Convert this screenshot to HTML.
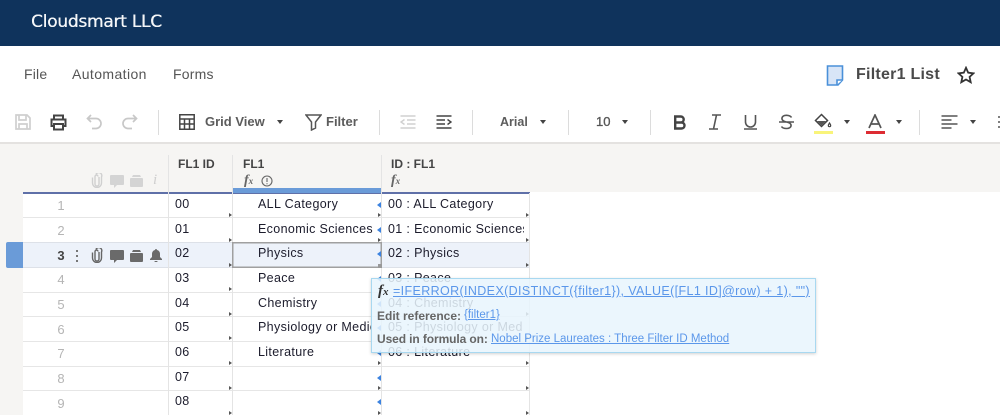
<!DOCTYPE html>
<html><head><meta charset="utf-8"><style>
html,body{margin:0;padding:0;background:#fff}
#p{position:relative;width:1000px;height:415px;overflow:hidden;background:#fff;font-family:"Liberation Sans",sans-serif;color:#222;filter:blur(.3px)}
#p div,#p svg,#p span.a{position:absolute}
.t{white-space:nowrap;line-height:16px}
.m{font-size:14px;color:#555;top:66px}
.tb{font-size:13px;font-weight:bold;color:#5c5c5c;top:114px}
.c{font-size:12.5px;color:#1c1c2c;white-space:nowrap;line-height:14px;letter-spacing:.35px}
.n{font-size:13px;color:#b5b5b5;width:16px;text-align:center;left:53px;line-height:14px}
.h{font-size:12px;font-weight:bold;color:#444;line-height:14px;white-space:nowrap}
.vl{width:1px;background:#e4e4e4}
.hl{height:1px;background:#e6e6e6}
.sep{width:1px;height:25px;top:110px;background:#dcdcdc}
.ar{width:0;height:0;border-left:4px solid transparent;border-right:4px solid transparent;border-top:5px solid #444}
.tr{width:0;height:0;border-top:2px solid transparent;border-bottom:2px solid transparent;border-left:3px solid #555}
.bl{width:0;height:0;border-top:3px solid transparent;border-bottom:3px solid transparent;border-right:4px solid #3b82e0}
svg{fill:none;stroke:#555;stroke-width:1.7}
</style></head><body><div id="p">

<div style="left:0;top:0;width:1000px;height:46px;background:#0f335c"></div>
<div class="t" style="left:31px;top:12px;font-size:17px;line-height:20px;color:#f4f6f8;font-family:'DejaVu Sans','Liberation Sans',sans-serif;letter-spacing:-.25px;text-shadow:.3px 0 #f4f6f8">Cloudsmart LLC</div>

<div class="t m" style="left:24px;letter-spacing:.2px">File</div>
<div class="t m" style="left:72px;letter-spacing:.4px">Automation</div>
<div class="t m" style="left:173px;letter-spacing:.2px">Forms</div>

<svg style="left:826px;top:65px;stroke:#4a90d9;stroke-width:1.6" width="18" height="21" viewBox="0 0 18 21"><path fill="#d8e5f7" d="M1.500 1h15v14l-4.500 5h-10.500z"/><path fill="#fff" d="M11 19.500v-4.500h5.500"/></svg>
<div class="t" style="left:856px;top:66px;font-size:16px;line-height:18px;font-weight:bold;color:#4a4a4a;letter-spacing:.25px">Filter1 List</div>
<svg style="left:957px;top:66px;stroke:#333;stroke-width:1.800" width="18" height="18" viewBox="0 0 18 18"><path d="M9 1.800l2.200 4.900 5.300.6-3.900 3.600 1.100 5.300L9 13.500l-4.700 2.700 1.100-5.300L1.500 7.300l5.300-.6z"/></svg>

<!-- toolbar icons -->
<svg style="left:14px;top:113px;stroke:#cfcfcf" width="18" height="18" viewBox="0 0 18 18"><path d="M2 2h11l3 3v11H2zM5 2v5h7V2M5 16v-5h8v5"/></svg>
<svg style="left:50px;top:114px;stroke:#444;stroke-width:2" width="17" height="17" viewBox="0 0 17 17"><path d="M4 5V1.500h9V5M4 12H1.500V5.500h14V12H13M4 10h9v5.500H4z"/></svg>
<svg style="left:86px;top:114px;stroke:#c8c8c8" width="17" height="17" viewBox="0 0 17 17"><path d="M5 1L1.500 4.500 5 8M2 4.500h8a4.500 4.500 0 0 1 0 10H6"/></svg>
<svg style="left:121px;top:114px;stroke:#c8c8c8" width="17" height="17" viewBox="0 0 17 17"><path d="M12 1l3.500 3.500L12 8M15 4.500H7a4.500 4.500 0 0 0 0 10h4"/></svg>
<div class="sep" style="left:158px"></div>
<svg style="left:179px;top:114px;stroke:#444;stroke-width:1.500" width="16" height="16" viewBox="0 0 16 16"><path d="M.8.800h14.400v14.400H.8zM.8 5h14.400M.8 10h14.400M5.500 5v10M10.500 5v10"/></svg>
<div class="t tb" style="left:205px">Grid View</div>
<div class="ar" style="left:277px;top:120px;border-left-width:3px;border-right-width:3px;border-top-width:4px"></div>
<svg style="left:305px;top:114px;stroke:#555;stroke-width:1.500" width="17" height="17" viewBox="0 0 17 17"><path d="M1 1h15l-5.500 7v6l-4 2V8z"/></svg>
<div class="t tb" style="left:326px">Filter</div>
<div class="sep" style="left:379px"></div>
<svg style="left:400px;top:115px;stroke:#d0d0d0;stroke-width:1.400" width="16" height="14" viewBox="0 0 16 14"><path d="M.5 1h15M7 5h8.500M7 9h8.500M.5 13h15M4.500 4.500L1 7l3.500 2.500"/></svg>
<svg style="left:436px;top:115px;stroke:#444;stroke-width:1.400" width="16" height="14" viewBox="0 0 16 14"><path d="M.5 1h15M.5 5h8.500M.5 9h8.500M.5 13h15M11.500 4.500L15 7l-3.500 2.500"/></svg>
<div class="sep" style="left:472px"></div>
<div class="t tb" style="left:500px;font-size:12.500px">Arial</div>
<div class="ar" style="left:540px;top:120px;border-left-width:3px;border-right-width:3px;border-top-width:4px"></div>
<div class="sep" style="left:568px"></div>
<div class="t tb" style="left:596px;font-weight:normal;color:#555;-webkit-text-stroke:.3px #555">10</div>
<div class="ar" style="left:622px;top:120px;border-left-width:3px;border-right-width:3px;border-top-width:4px"></div>
<div class="sep" style="left:650px"></div>

<svg style="left:673px;top:115px;stroke:#444;stroke-width:2.400" width="14" height="15" viewBox="0 0 14 15"><path d="M2.200 1.500h5.500a3 3 0 0 1 0 6H2.200zM2.200 7.500h6.300a3 3 0 0 1 0 6H2.200z"/></svg>
<svg style="left:708px;top:114px;stroke:#555;stroke-width:1.600" width="14" height="16" viewBox="0 0 14 16"><path d="M4 1h9M1 15h9M8.500 1L5.500 15"/></svg>
<svg style="left:743px;top:114px;stroke:#555;stroke-width:1.600" width="15" height="16" viewBox="0 0 15 16"><path d="M2.500 1v7a5 5 0 0 0 10 0V1M1 15h13"/></svg>
<svg style="left:779px;top:114px;stroke:#555;stroke-width:1.600" width="15" height="16" viewBox="0 0 15 16"><path d="M12.500 3.500C11 1 4 0 3 4c-.5 2.500 2 3.500 4.500 4 2.500.5 5 1.500 4.500 4-1 3.500-8 3-9.500.5M0 8h15"/></svg>
<svg style="left:814px;top:113px;stroke:#444;stroke-width:1.500" width="18" height="16" viewBox="0 0 18 16"><path d="M7.500 1.500l6 6-6 6-6-6z"/><path fill="#555" stroke="none" d="M3 8h9l-4.500 4.500z"/><path stroke-width="1.200" d="M15.500 10c-1 1.500-1.200 2-1.200 2.500a1.200 1.200 0 0 0 2.400 0c0-.5-.200-1-1.200-2.500z"/></svg>
<div style="left:814px;top:131px;width:19px;height:3px;background:#f9f47a"></div>
<div class="ar" style="left:844px;top:120px;border-left-width:3px;border-right-width:3px;border-top-width:4px"></div>
<svg style="left:868px;top:114px;stroke:#555;stroke-width:1.700" width="14" height="15" viewBox="0 0 14 15"><path d="M1 14L7 1l6 13M3 10h8"/></svg>
<div style="left:866px;top:131px;width:19px;height:3px;background:#dd2c33"></div>
<div class="ar" style="left:896px;top:120px;border-left-width:3px;border-right-width:3px;border-top-width:4px"></div>
<div class="sep" style="left:919px"></div>
<svg style="left:941px;top:115px;stroke:#555;stroke-width:1.500" width="17" height="15" viewBox="0 0 17 15"><path d="M.5 1h16M.5 5h10M.5 9h16M.5 13h10"/></svg>
<div class="ar" style="left:970px;top:120px;border-left-width:3px;border-right-width:3px;border-top-width:4px"></div>
<svg style="left:998px;top:115px;stroke:#555;stroke-width:1.600" width="2" height="15"><path d="M0 2h2M0 7h2M0 12h2"/></svg>

<!-- grid backgrounds -->
<div style="left:0;top:142px;width:1000px;height:2px;background:#e4e2e0"></div>
<div style="left:0;top:144px;width:1000px;height:48px;background:#f6f5f3"></div>
<div style="left:0;top:192px;width:23px;height:223px;background:#f6f5f3"></div>

<div style="left:23px;top:192px;width:507px;height:2px;background:#5f70a8"></div>
<div style="left:232px;top:188px;width:149px;height:5px;background:#6a9bd8"></div>

<!-- row highlight -->
<div style="left:23px;top:243px;width:507px;height:24px;background:#edf2fa"></div>
<div style="left:6px;top:242px;width:17px;height:26px;background:#6a9bd8;border-radius:2px 0 0 2px"></div>

<!-- row lines -->
<div class="hl" style="left:23px;top:217px;width:507px"></div>
<div class="hl" style="left:23px;top:242px;width:507px;background:#dde1e8"></div>
<div class="hl" style="left:23px;top:267px;width:507px;background:#dde1e8"></div>
<div class="hl" style="left:23px;top:292px;width:507px"></div>
<div class="hl" style="left:23px;top:316px;width:507px"></div>
<div class="hl" style="left:23px;top:341px;width:507px"></div>
<div class="hl" style="left:23px;top:366px;width:507px"></div>
<div class="hl" style="left:23px;top:390px;width:507px"></div>

<!-- col lines -->
<div class="vl" style="left:168px;top:155px;height:260px"></div>
<div class="vl" style="left:232px;top:155px;height:260px"></div>
<div class="vl" style="left:381px;top:155px;height:260px"></div>
<div class="vl" style="left:529px;top:193px;height:222px"></div>

<!-- header -->
<div class="h" style="left:178px;top:157px">FL1 ID</div>
<div class="h" style="left:243px;top:157px">FL1</div>
<div class="h" style="left:391px;top:157px">ID : FL1</div>
<div style="left:244px;top:173px;font:italic bold 14px 'Liberation Serif',serif;color:#666;line-height:15px">f<span style="font-size:9px">x</span></div>
<div style="left:391px;top:173px;font:italic bold 14px 'Liberation Serif',serif;color:#666;line-height:15px">f<span style="font-size:9px">x</span></div>
<svg style="left:261px;top:175px;stroke:#666;stroke-width:1.100" width="12" height="12" viewBox="0 0 12 12"><circle cx="6" cy="6" r="5"/><path d="M6 3v4M6 8.300v1"/></svg>

<!-- header icons -->
<svg style="left:91px;top:173px;stroke:#d0d0d0;stroke-width:1.400" width="12" height="15" viewBox="0 0 12 15"><path d="M8 4v7a2 2 0 0 1-4 0V3.500a1.500 1.500 0 0 1 3 0"/><path d="M1.500 4.500V10a4.500 4.500 0 0 0 9 0V4A3 3 0 0 0 5 1.300"/></svg>
<svg style="left:110px;top:175px;stroke:none;fill:#d4d4d4" width="14" height="13" viewBox="0 0 14 13"><path d="M1 0h12a1 1 0 0 1 1 1v8a1 1 0 0 1-1 1H7l-3 3v-3H1a1 1 0 0 1-1-1V1a1 1 0 0 1 1-1z"/></svg>
<svg style="left:130px;top:175px;stroke:none;fill:#d4d4d4" width="13" height="12" viewBox="0 0 13 12"><path d="M3 0h7l1 2H2zM1 3h11a1 1 0 0 1 1 1v7a1 1 0 0 1-1 1H1a1 1 0 0 1-1-1V4a1 1 0 0 1 1-1z"/></svg>
<div style="left:153px;top:173px;font:italic 15px 'Liberation Serif',serif;color:#cfcfcf;line-height:15px">i</div>

<!-- row 3 icons -->
<div style="left:76px;top:250px;width:2px;height:2px;background:#777"></div>
<div style="left:76px;top:255px;width:2px;height:2px;background:#777"></div>
<div style="left:76px;top:260px;width:2px;height:2px;background:#777"></div>
<svg style="left:91px;top:248px;stroke:#666;stroke-width:1.400" width="12" height="15" viewBox="0 0 12 15"><path d="M8 4v7a2 2 0 0 1-4 0V3.500a1.500 1.500 0 0 1 3 0"/><path d="M1.500 4.500V10a4.500 4.500 0 0 0 9 0V4A3 3 0 0 0 5 1.300"/></svg>
<svg style="left:110px;top:250px;stroke:none;fill:#6a6a6a" width="14" height="13" viewBox="0 0 14 13"><path d="M1 0h12a1 1 0 0 1 1 1v8a1 1 0 0 1-1 1H7l-3 3v-3H1a1 1 0 0 1-1-1V1a1 1 0 0 1 1-1z"/></svg>
<svg style="left:130px;top:250px;stroke:none;fill:#6a6a6a" width="13" height="12" viewBox="0 0 13 12"><path d="M3 0h7l1 2H2zM1 3h11a1 1 0 0 1 1 1v7a1 1 0 0 1-1 1H1a1 1 0 0 1-1-1V4a1 1 0 0 1 1-1z"/></svg>
<svg style="left:150px;top:249px;stroke:none;fill:#6a6a6a" width="12" height="13" viewBox="0 0 12 13"><path d="M6 0a1 1 0 0 1 1 1c2 .5 3 2 3 4v3l2 2v1H0v-1l2-2V5c0-2 1-3.500 3-4a1 1 0 0 1 1-1zM4.500 12h3a1.500 1.500 0 0 1-3 0z"/></svg>

<!-- row numbers -->
<div class="n" style="top:199px">1</div>
<div class="n" style="top:224px">2</div>
<div class="n" style="top:249px;color:#444;font-weight:bold">3</div>
<div class="n" style="top:273px">4</div>
<div class="n" style="top:298px">5</div>
<div class="n" style="top:323px">6</div>
<div class="n" style="top:347px">7</div>
<div class="n" style="top:372px">8</div>
<div class="n" style="top:397px">9</div>

<!-- col 1 -->
<div class="c" style="left:175px;top:197px">00</div>
<div class="c" style="left:175px;top:222px">01</div>
<div class="c" style="left:175px;top:246px">02</div>
<div class="c" style="left:175px;top:271px">03</div>
<div class="c" style="left:175px;top:296px">04</div>
<div class="c" style="left:175px;top:320px">05</div>
<div class="c" style="left:175px;top:345px">06</div>
<div class="c" style="left:175px;top:370px">07</div>
<div class="c" style="left:175px;top:394px">08</div>

<!-- col 2 -->
<div class="c" style="left:258px;top:197px">ALL Category</div>
<div class="c" style="left:258px;top:222px">Economic Sciences</div>
<div class="c" style="left:258px;top:246px">Physics</div>
<div class="c" style="left:258px;top:271px">Peace</div>
<div class="c" style="left:258px;top:296px">Chemistry</div>
<div class="c" style="left:258px;top:320px;width:113px;overflow:hidden">Physiology or Medicine</div>
<div class="c" style="left:258px;top:345px">Literature</div>

<!-- col 3 -->
<div class="c" style="left:388px;top:197px">00 : ALL Category</div>
<div class="c" style="left:388px;top:222px;width:136px;overflow:hidden">01 : Economic Sciences</div>
<div class="c" style="left:388px;top:246px">02 : Physics</div>
<div class="c" style="left:388px;top:271px">03 : Peace</div>
<div class="c" style="left:388px;top:296px">04 : Chemistry</div>
<div class="c" style="left:388px;top:320px;width:135px;overflow:hidden">05 : Physiology or Medicine</div>
<div class="c" style="left:388px;top:345px">06 : Literature</div>

<!-- selected cell -->
<div style="left:232px;top:242px;width:148px;height:24px;border:1px solid #a0a0a0;box-shadow:inset 0 0 0 .5px #a0a0a0"></div>
<div style="left:378px;top:264px;width:4px;height:4px;background:#999"></div>

<!-- corner markers -->
<div class="tr" style="left:229px;top:213px"></div><div class="tr" style="left:229px;top:238px"></div><div class="tr" style="left:229px;top:263px"></div><div class="tr" style="left:229px;top:287px"></div><div class="tr" style="left:229px;top:312px"></div><div class="tr" style="left:229px;top:336px"></div><div class="tr" style="left:229px;top:361px"></div><div class="tr" style="left:229px;top:386px"></div><div class="tr" style="left:229px;top:411px"></div>
<div class="tr" style="left:378px;top:213px"></div><div class="tr" style="left:378px;top:238px"></div><div class="tr" style="left:378px;top:361px"></div><div class="tr" style="left:378px;top:386px"></div><div class="tr" style="left:378px;top:411px"></div>
<div class="tr" style="left:526px;top:213px"></div><div class="tr" style="left:526px;top:238px"></div><div class="tr" style="left:526px;top:263px"></div><div class="tr" style="left:526px;top:287px"></div><div class="tr" style="left:526px;top:312px"></div><div class="tr" style="left:526px;top:336px"></div><div class="tr" style="left:526px;top:361px"></div><div class="tr" style="left:526px;top:386px"></div><div class="tr" style="left:526px;top:411px"></div>
<div class="bl" style="left:377px;top:202px"></div><div class="bl" style="left:377px;top:227px"></div><div class="bl" style="left:377px;top:251px"></div><div class="bl" style="left:377px;top:276px"></div><div class="bl" style="left:377px;top:301px"></div><div class="bl" style="left:377px;top:325px"></div><div class="bl" style="left:377px;top:350px"></div><div class="bl" style="left:377px;top:375px"></div><div class="bl" style="left:377px;top:399px"></div>

<!-- tooltip -->
<div style="left:371px;top:278px;width:443px;height:73px;background:rgba(232,244,253,.86);border:1px solid #a8d8f0;box-shadow:0 1px 3px rgba(0,0,0,.18)"></div>
<div style="left:378px;top:283px;font:italic bold 15px 'Liberation Serif',serif;color:#333;line-height:16px">f<span style="font-size:11px">x</span></div>
<div class="t" style="left:393px;top:284px;font-size:12.500px;line-height:15px;color:#5b97ea;text-decoration:underline;letter-spacing:.37px">=IFERROR(INDEX(DISTINCT({filter1}), VALUE([FL1 ID]@row) + 1), "")</div>
<div class="t" style="left:377px;top:309px;font-size:12px;line-height:14px;font-weight:bold;color:#666">Edit reference:</div>
<div class="t" style="left:464px;top:308px;font-size:11.500px;line-height:14px;color:#5b97ea;text-decoration:underline">{filter1}</div>
<div class="t" style="left:377px;top:332px;font-size:12px;line-height:14px;font-weight:bold;color:#666;letter-spacing:-.1px">Used in formula on:</div>
<div class="t" style="left:491px;top:332px;font-size:11.500px;line-height:14px;color:#5b97ea;text-decoration:underline">Nobel Prize Laureates : Three Filter ID Method</div>

</div></body></html>
